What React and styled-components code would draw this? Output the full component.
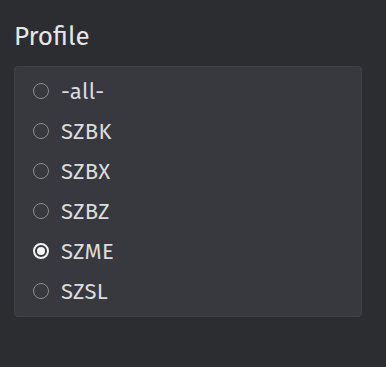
import React from "react";
import styled, { createGlobalStyle } from "styled-components";

const Global = createGlobalStyle`
  html, body { margin: 0; padding: 0; background: #2c2d31; }
  body { font-family: "Fira Sans", "Open Sans", "Noto Sans", sans-serif; }
`;

const Page = styled.div`
  width: 386px;
  height: 367px;
  box-sizing: border-box;
  padding: 21px 24px 0 14px;
  background: #2c2d31;
`;

const Title = styled.div`
  color: #e6e6e6;
  font-size: 26px;
  line-height: 32px;
  margin: 0 0 13px 0;
`;

const Panel = styled.div`
  background: #38393e;
  border: 1px solid #404146;
  border-radius: 4px;
  padding: 4px 0 5px 0;
  display: flex;
  flex-direction: column;
`;

const Row = styled.label`
  display: flex;
  align-items: center;
  height: 40px;
  padding-left: 18px;
  gap: 12px;
  color: #dcdcdc;
  font-size: 22px;
  letter-spacing: 0.3px;
`;

const Radio = styled.span`
  width: 16px;
  height: 16px;
  flex: none;
  box-sizing: border-box;
  border-radius: 50%;
  border: ${(p) => (p.$on ? "2px solid #f4f4f4" : "1.5px solid #8c8c8f")};
  display: flex;
  align-items: center;
  justify-content: center;
  &::after {
    content: "";
    display: ${(p) => (p.$on ? "block" : "none")};
    width: 8px;
    height: 8px;
    border-radius: 50%;
    background: #f4f4f4;
  }
`;

const items = ["-all-", "SZBK", "SZBX", "SZBZ", "SZME", "SZSL"];

export default function App() {
  return (
    <Page>
      <Global />
      <Title>Profile</Title>
      <Panel>
        {items.map((it) => (
          <Row key={it}>
            <Radio $on={it === "SZME"} />
            {it}
          </Row>
        ))}
      </Panel>
    </Page>
  );
}
